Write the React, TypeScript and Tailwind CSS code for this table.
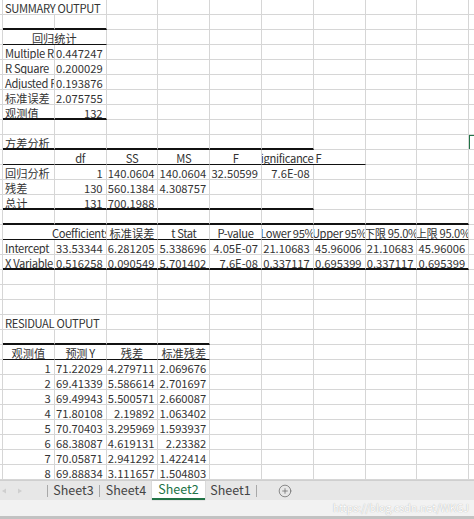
import React from 'react';
import { CirclePlus } from 'lucide-react';

type Cell = { t?: string; a?: 'l' | 'r' | 'c'; s?: number; ov?: number };

const n = (v: string): Cell => ({ t: v, a: 'r' });
const h = (v: string): Cell => ({ t: v, a: 'c' });

const rows: Cell[][] = [
  [{ t: 'SUMMARY OUTPUT', s: 2 }],
  [],
  [{ t: '回归统计', a: 'c', s: 2 }],
  [{ t: 'Multiple R' }, n('0.447247')],
  [{ t: 'R Square' }, n('0.200029')],
  [{ t: 'Adjusted R Square' }, n('0.193876')],
  [{ t: '标准误差' }, n('2.075755')],
  [{ t: '观测值' }, n('132')],
  [],
  [{ t: '方差分析' }],
  [{}, h('df'), h('SS'), h('MS'), h('F'), { t: 'Significance F', s: 2, ov: 0 }],
  [{ t: '回归分析' }, n('1'), n('140.0604'), n('140.0604'), n('32.50599'), n('7.6E-08')],
  [{ t: '残差' }, n('130'), n('560.1384'), n('4.308757')],
  [{ t: '总计' }, n('131'), n('700.1988')],
  [],
  [
    { t: 'Coefficients', s: 2, ov: 1 },
    h('标准误差'),
    h('t Stat'),
    h('P-value'),
    h('Lower 95%'),
    h('Upper 95%'),
    h('下限 95.0%'),
    h('上限 95.0%'),
  ],
  [{ t: 'Intercept' }, n('33.53344'), n('6.281205'), n('5.338696'), n('4.05E-07'), n('21.10683'), n('45.96006'), n('21.10683'), n('45.96006')],
  [{ t: 'X Variable 1' }, n('0.516258'), n('0.090549'), n('5.701402'), n('7.6E-08'), n('0.337117'), n('0.695399'), n('0.337117'), n('0.695399')],
  [],
  [],
  [],
  [{ t: 'RESIDUAL OUTPUT', s: 2 }],
  [],
  [h('观测值'), h('预测 Y'), h('残差'), h('标准残差')],
  ...[
    ['1', '71.22029', '4.279711', '2.069676'],
    ['2', '69.41339', '5.586614', '2.701697'],
    ['3', '69.49943', '5.500571', '2.660087'],
    ['4', '71.80108', '2.19892', '1.063402'],
    ['5', '70.70403', '3.295969', '1.593937'],
    ['6', '68.38087', '4.619131', '2.23382'],
    ['7', '70.05871', '2.941292', '1.422414'],
    ['8', '69.88834', '3.111657', '1.504803'],
  ].map((r) => r.map(n)),
];

// bottom rule under a row: [first col, last col, thick?]
const rules: Record<number, [number, number, boolean]> = {
  1: [0, 1, true],
  2: [0, 1, false],
  7: [0, 1, true],
  9: [0, 5, true],
  10: [0, 5, false],
  13: [0, 5, true],
  14: [0, 8, true],
  15: [0, 8, false],
  17: [0, 8, true],
  22: [0, 3, true],
  23: [0, 3, false],
};

const COLS = 10;

function SheetRow({ cells, ri }: { cells: Cell[]; ri: number }) {
  const rule = rules[ri];
  const out: React.ReactNode[] = [];
  let col = 0;
  const list = [...cells];
  while (col < COLS) {
    const c = list.shift() || {};
    const span = c.s || 1;
    const inRule = rule && col >= rule[0] && col <= rule[1];
    const bottom = inRule
      ? rule[2]
        ? 'border-b-2 border-b-[#111]'
        : 'border-b border-b-[#111]'
      : 'border-b border-b-[#d6d6d6]';
    const width = span === 2 ? 'w-[103.6px]' : 'w-[51.8px]';
    const align =
      c.a === 'r' ? 'justify-end pr-[3px]' : c.a === 'c' ? 'justify-center' : 'justify-start pl-[2px]';
    // latin labels are a touch narrower in the original font
    const narrow = c.t && c.a !== 'r' && /[A-Za-z%]/.test(c.t) ? 'tracking-[-0.35px]' : '';
    out.push(
      <div
        key={col}
        className={`relative flex h-[15px] shrink-0 overflow-hidden whitespace-nowrap border-r border-r-[#d6d6d6] leading-[16px] ${width} ${bottom} ${narrow} ${
          c.ov === undefined ? align : ''
        }`}
      >
        {c.ov !== undefined ? (
          <div className={`flex w-[51.8px] shrink-0 justify-center ${c.ov === 1 ? 'ml-[51.8px]' : ''}`}>
            <span className="shrink-0">{c.t}</span>
          </div>
        ) : (
          c.t
        )}
        {ri === 9 && col === 9 && (
          <div className="absolute left-[-1px] top-[-1px] h-[17px] w-[54px] border-2 border-[#217346]" />
        )}
      </div>
    );
    col += span;
  }
  return (
    <div className="flex h-[15px]">
      <div className="h-[15px] w-[3px] shrink-0 border-b border-r border-[#d6d6d6]" />
      {out}
    </div>
  );
}

function Tab({ label, active, sep }: { label: string; active?: boolean; sep?: boolean }) {
  if (active) {
    return (
      <div className="flex w-[53px] shrink-0 items-center justify-center border-b-2 border-[#217346] bg-white text-[#217346] shadow-[0_0_1px_#999]">
        {label}
      </div>
    );
  }
  return (
    <div className="flex w-[52px] shrink-0 items-center">
      <span className="flex-1 text-center">{label}</span>
      {sep && <span className="h-[12px] w-px bg-[#a8a8a8]" />}
    </div>
  );
}

export default function App() {
  return (
    <div className="h-[519px] w-[474px] overflow-hidden bg-white font-['Noto_Sans_CJK_SC',sans-serif] text-[11.2px] text-[#333]">
      <div className="h-[480px]">
        {rows.map((r, i) => (
          <SheetRow key={i} cells={r} ri={i} />
        ))}
      </div>

      {/* sheet tabs */}
      <div className="flex h-[20px] items-stretch border-t border-[#cfcfcf] bg-[#e7e7e7] text-[12.5px] text-[#444]">
        <div className="flex w-[48px] shrink-0 items-center">
          <svg width="6" height="6" viewBox="0 0 6 6" className="ml-[1px]">
            <path d="M5 0.5 L1 3 L5 5.5 Z" fill="#cfcfcf" />
          </svg>
          <svg width="6" height="6" viewBox="0 0 6 6" className="ml-[10px]">
            <path d="M1 0.5 L5 3 L1 5.5 Z" fill="#cfcfcf" />
          </svg>
          <span className="ml-auto h-[12px] w-px bg-[#a8a8a8]" />
        </div>
        <Tab label="Sheet3" sep />
        <Tab label="Sheet4" />
        <Tab label="Sheet2" active />
        <Tab label="Sheet1" sep />
        <div className="flex w-[56px] items-center justify-center">
          <CirclePlus size={14} strokeWidth={1.3} color="#6a6a6a" />
        </div>
      </div>

      {/* status strip */}
      <div className="flex h-[16px] items-center justify-end bg-[#f2f2f2] pr-[5px] text-[10.5px] text-white [text-shadow:0_0_1px_#9a9a9a]">
        https://blog.csdn.net/WKGJ
      </div>
      <div className="h-[3px] bg-[#c2c2c2]" />
    </div>
  );
}
